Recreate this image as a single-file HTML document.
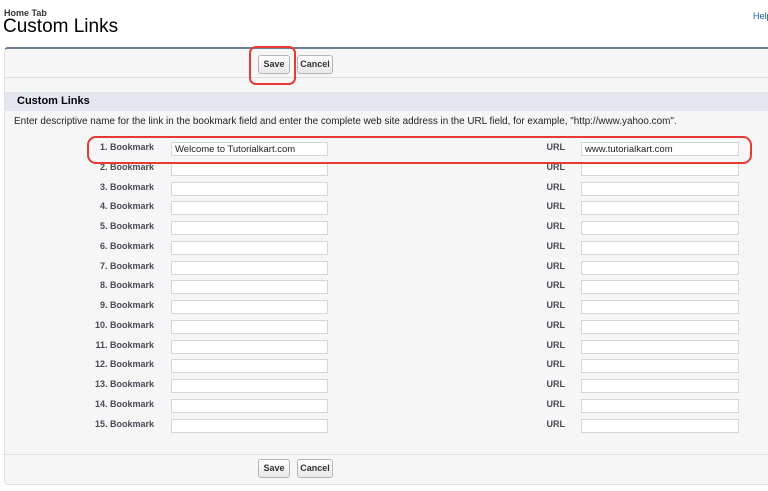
<!DOCTYPE html>
<html><head><style>
body{margin:0;width:768px;height:491px;background:#fff;font-family:"Liberation Sans",Arial,sans-serif;position:relative;overflow:hidden}
.a{position:absolute}
.btn{position:absolute;height:17px;border:1px solid #b5b5b5;border-radius:3px;background:linear-gradient(#fff,#e8e8e8);font-size:9px;font-weight:bold;color:#333;text-align:center;line-height:17px}
.lbl{position:absolute;font-size:9px;font-weight:bold;color:#4a4a56;text-align:right}
.inp{position:absolute;height:14px;border:1px solid #d6d6d6;background:#fff;font-size:9.5px;line-height:14px;padding-left:3px;box-sizing:border-box;color:#222}
</style></head><body>
<div class="a" style="left:4px;top:8px;font-size:9px;font-weight:bold;color:#333">Home Tab</div>
<div class="a" style="left:3px;top:16px;font-size:19px;color:#000">Custom Links</div>
<div class="a" style="left:753px;top:11px;font-size:9px;color:#1a5aa8">Help</div>
<div class="a" style="left:4px;top:47px;width:770px;height:435px;background:#f6f6f6;border-top:2px solid #6f7d95;border-radius:4px;border-left:1px solid #e2e2e2;border-bottom:1px solid #e2e2e2"></div>
<div class="a" style="left:5px;top:77px;width:770px;height:1px;background:#e0e0e0"></div>
<div class="btn" style="left:258px;top:55px;width:30px">Save</div>
<div class="btn" style="left:297px;top:55px;width:34px">Cancel</div>
<div class="a" style="left:5px;top:92px;width:770px;height:19px;background:#e4e7ef"></div>
<div class="a" style="left:17px;top:95px;font-size:11px;font-weight:bold;color:#000">Custom Links</div>
<div class="a" style="left:14px;top:116px;font-size:9.9px;color:#222;white-space:nowrap">Enter descriptive name for the link in the bookmark field and enter the complete web site address in the URL field, for example, "http://www.yahoo.com".</div>
<div id="rows"></div>
<div class="a" style="left:5px;top:454px;width:770px;height:1px;background:#e0e0e0"></div>
<div class="btn" style="left:258px;top:459px;width:30px">Save</div>
<div class="btn" style="left:297px;top:459px;width:34px">Cancel</div>
<div class="a" style="left:249px;top:46px;width:43px;height:35px;border:2px solid #e53a36;border-radius:7px"></div>
<div class="a" style="left:87px;top:136px;width:661px;height:24px;border:2px solid #e53a36;border-radius:9px"></div>
<script>
var h='';
for(var i=0;i<15;i++){var y=141+i*19.75;
h+='<div class="lbl" style="left:60px;width:94px;top:'+(y+1)+'px">'+(i+1)+'. Bookmark</div>';
h+='<div class="inp" style="left:171px;width:157px;top:'+(y+1)+'px">'+(i==0?'Welcome to Tutorialkart.com':'')+'</div>';
h+='<div class="lbl" style="left:540px;width:25px;top:'+(y+1)+'px">URL</div>';
h+='<div class="inp" style="left:581px;width:158px;top:'+(y+1)+'px">'+(i==0?'www.tutorialkart.com':'')+'</div>';}
document.getElementById('rows').innerHTML=h;
</script>
</body></html>
